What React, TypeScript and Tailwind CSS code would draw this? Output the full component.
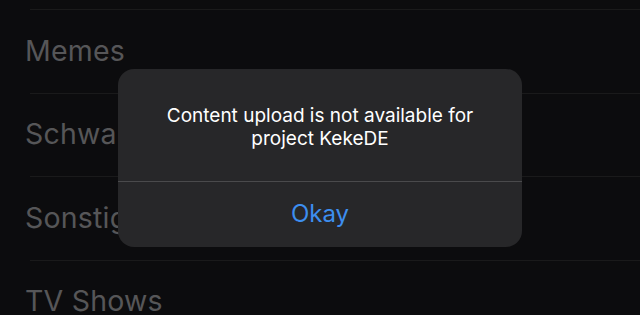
import React from "react";

const rows = ["Memes", "Schwanz", "Sonstiges", "TV Shows"];

export default function App() {
  return (
    <div
      className="relative w-[640px] h-[315px] overflow-hidden bg-[#0e0e10]"
      style={{ fontFamily: "Inter, 'Noto Sans', sans-serif" }}
    >
      <div className="flex flex-col">
        <div className="h-[9px]" />
        {rows.map((r) => (
          <div key={r} className="flex flex-col">
            <div className="ml-[30px] h-px bg-[#1d1d1f]" />
            <div className="h-[82.5px] flex items-center pl-[25px] text-[28.5px] text-[#606062] tracking-[0.2px]">
              {r}
            </div>
          </div>
        ))}
      </div>

      <div className="absolute inset-0 bg-black/10" />

      <div className="absolute left-[118px] top-[69px] w-[404px] h-[178px] rounded-[16px] bg-[#272729] flex flex-col overflow-hidden">
        <div className="h-[112px] flex items-center justify-center px-4 pt-[3px] text-center text-white text-[19px] leading-[23px]">
          <div>
            Content upload is not available for
            <br />
            project KekeDE
          </div>
        </div>
        <div className="h-px bg-[#4a4a4c]" />
        <div className="flex-1 flex items-center justify-center text-[24px] text-[#3d8ef0] pb-[2px]">
          Okay
        </div>
      </div>
    </div>
  );
}
